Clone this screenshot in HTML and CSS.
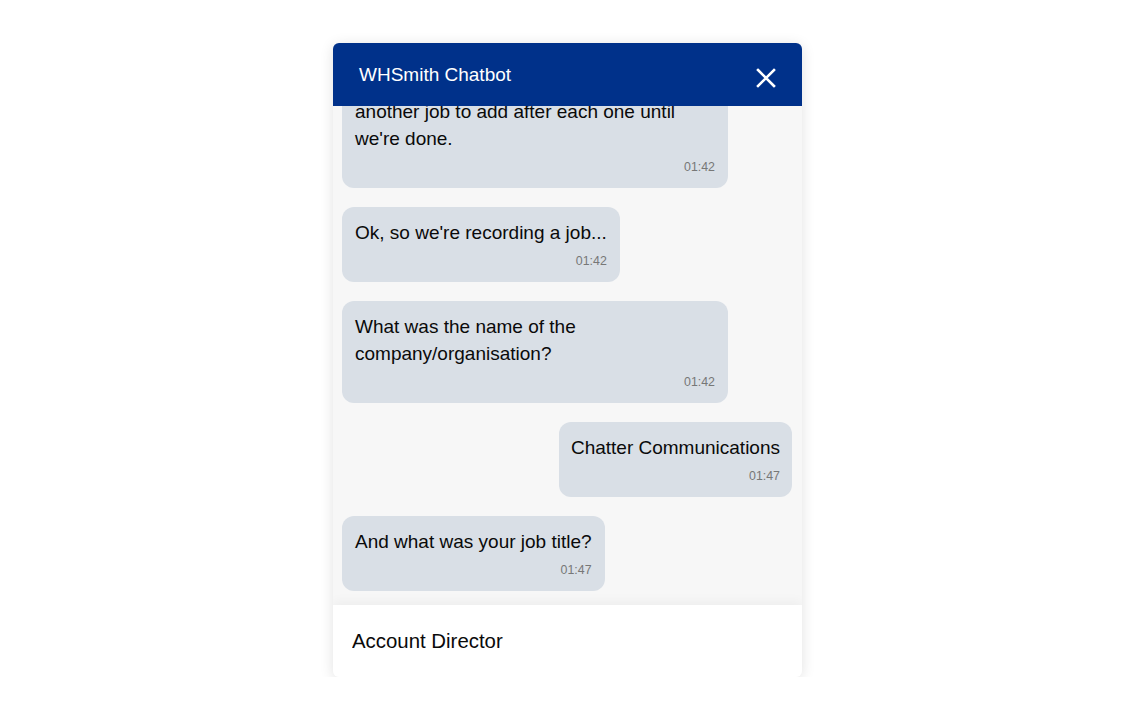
FILE: index.html
```html
<!DOCTYPE html>
<html lang="en">
<head>
    <meta charset="UTF-8">
    <meta name="viewport" content="width=device-width, initial-scale=1.0">
    <title>WHSmith Chatbot</title>
    <link rel="stylesheet" href="styles.css">
</head>
<body>
    <div class="page">
        <div class="chat">
            <!-- Header -->
            <div class="chat-header">
                <span class="chat-title">WHSmith Chatbot</span>
                <button type="button" class="close-btn" aria-label="Close">
                    <svg width="20" height="20" viewBox="0 0 20 20">
                        <path d="M2 2 L18 18 M18 2 L2 18" stroke="#fff" stroke-width="2.6" stroke-linecap="square"/>
                    </svg>
                </button>
            </div>

            <!-- Messages -->
            <div class="chat-messages">
                <div class="msg bot">
                    <div class="msg-text">Let's go through your work history. I'll ask about one job at a time, and check if there's<br>another job to add after each one until we're done.</div>
                    <div class="msg-time">01:42</div>
                </div>
                <div class="msg bot">
                    <div class="msg-text">Ok, so we're recording a job...</div>
                    <div class="msg-time">01:42</div>
                </div>
                <div class="msg bot">
                    <div class="msg-text">What was the name of the company/organisation?</div>
                    <div class="msg-time">01:42</div>
                </div>
                <div class="msg user">
                    <div class="msg-text">Chatter Communications</div>
                    <div class="msg-time">01:47</div>
                </div>
                <div class="msg bot">
                    <div class="msg-text">And what was your job title?</div>
                    <div class="msg-time">01:47</div>
                </div>
            </div>

            <!-- Input -->
            <div class="chat-input">
                <input type="text" id="reply" name="reply" value="Account Director">
            </div>
        </div>
    </div>
</body>
</html>
```

FILE: styles.css
```css
body {
    margin: 0;
    background-color: #fff;
    font-family: "Liberation Sans", Arial, sans-serif;
    color: #0a0a0a;
}
.page {
    padding: 43px 0 0 333px;
}
.chat {
    width: 469px;
    height: 634px;
    display: flex;
    flex-direction: column;
    border-radius: 6px;
    overflow: hidden;
    background-color: #f7f7f7;
    box-shadow: 0 2px 14px rgba(0, 0, 0, 0.12);
}
.chat-header {
    height: 63px;
    flex-shrink: 0;
    display: flex;
    align-items: center;
    justify-content: space-between;
    padding: 0 26px;
    background-color: #00318a;
    color: #fff;
}
.chat-title {
    font-size: 19px;
}
.close-btn {
    background: none;
    border: none;
    padding: 0;
    margin-top: 6px;
    width: 20px;
    height: 20px;
    cursor: pointer;
}
.close-btn svg {
    display: block;
}
.chat-messages {
    flex: 1;
    min-height: 0;
    overflow: hidden;
    display: flex;
    flex-direction: column;
    justify-content: flex-end;
    gap: 19px;
    padding: 0 10px 14px 9px;
}
.msg {
    flex-shrink: 0;
    max-width: 360px;
    padding: 12px 13px;
    border-radius: 12px;
    background-color: #d9dfe6;
}
.msg.bot {
    align-self: flex-start;
}
.msg.user {
    align-self: flex-end;
    padding: 12px 12px;
}
.msg-text {
    font-size: 19px;
    line-height: 27px;
}
.msg-time {
    margin-top: 6px;
    font-size: 12.4px;
    line-height: 18px;
    color: #777;
    text-align: right;
}
.chat-input {
    height: 72px;
    flex-shrink: 0;
    display: flex;
    align-items: center;
    padding: 0 19px;
    background-color: #fff;
    box-shadow: 0 -4px 10px rgba(0, 0, 0, 0.04);
}
.chat-input input {
    width: 100%;
    border: none;
    outline: none;
    padding: 0;
    font-family: "Liberation Sans", Arial, sans-serif;
    font-size: 20.4px;
    color: #0a0a0a;
    background: transparent;
}
```
